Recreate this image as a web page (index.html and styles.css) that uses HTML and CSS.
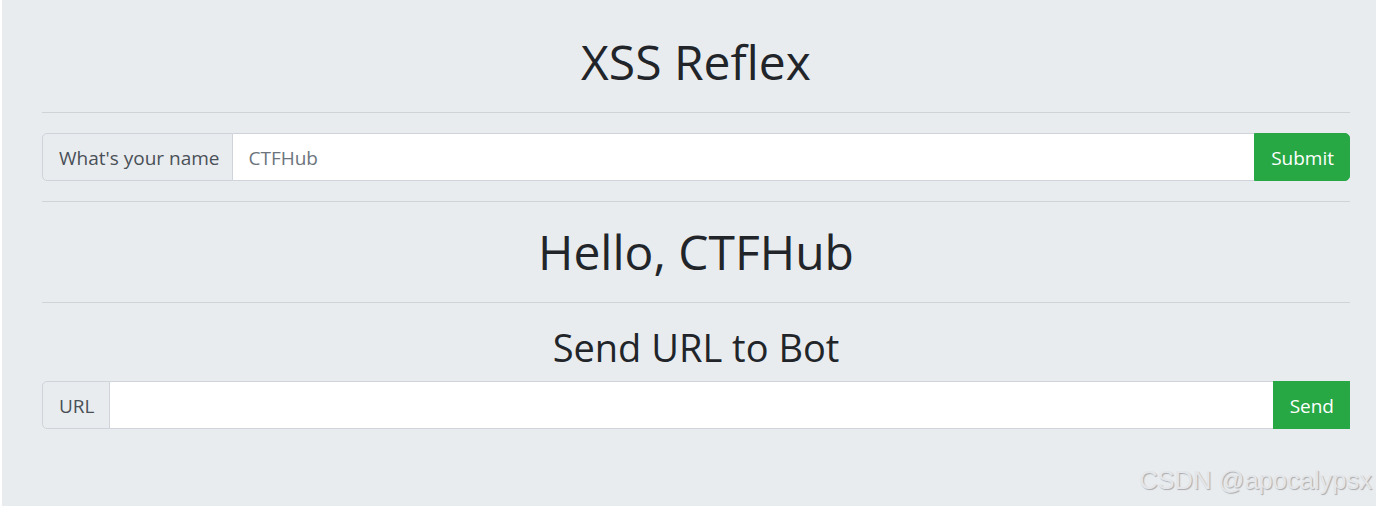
FILE: index.html
```html
<!DOCTYPE html>
<html lang="en">
<head>
<meta charset="utf-8">
<title>XSS Reflex</title>
<link rel="stylesheet" href="styles.css">
</head>
<body>
<main class="jumbo">
  <h1 class="title">XSS Reflex</h1>
  <hr class="rule">
  <form class="input-group">
    <span class="addon">What's your name</span>
    <input class="field" type="text" placeholder="CTFHub">
    <button class="btn btn-submit" type="button">Submit</button>
  </form>
  <hr class="rule">
  <h1 class="title">Hello, CTFHub</h1>
  <hr class="rule">
  <h2 class="subtitle">Send URL to Bot</h2>
  <form class="input-group">
    <span class="addon addon-url">URL</span>
    <input class="field" type="text" value="">
    <button class="btn btn-send" type="button">Send</button>
  </form>
  <div class="watermark">CSDN @apocalypsx</div>
</main>
</body>
</html>
```

FILE: styles.css
```css
html, body {
  margin: 0;
  padding: 0;
  background: #ffffff;
}

body {
  font-family: "Open Sans", "Noto Sans", sans-serif;
  color: #212529;
}

.jumbo {
  position: relative;
  margin-left: 2px;
  min-height: 506px;
  box-sizing: border-box;
  background: #e9ecef;
  padding: 32px 26px 0 40px;
}

.title {
  margin: 0;
  height: 60px;
  font-size: 48px;
  line-height: 60px;
  font-weight: 400;
  text-align: center;
  color: #212529;
}

.subtitle {
  margin: 0 0 10px;
  height: 48px;
  font-size: 38px;
  line-height: 48px;
  font-weight: 400;
  text-align: center;
  color: #212529;
}

.rule {
  margin: 20px 0;
  border: 0;
  border-top: 1px solid rgba(0, 0, 0, 0.1);
  height: 0;
}

.input-group {
  display: flex;
  height: 48px;
  margin: 0;
}

.addon {
  display: flex;
  align-items: center;
  padding: 1px 13px 0 16px;
  font-size: 19px;
  color: #495057;
  background: #e9ecef;
  border: 1px solid #ced4da;
  border-radius: 5px 0 0 5px;
  box-sizing: border-box;
}

.addon-url {
  padding: 1px 14px 0 16px;
}

.field {
  flex: 1;
  min-width: 0;
  height: 48px;
  box-sizing: border-box;
  margin: 0;
  padding: 1px 15px 0;
  font-family: inherit;
  font-size: 19px;
  color: #495057;
  background: #ffffff;
  border: 1px solid #ced4da;
  border-left: 0;
  border-right: 0;
  border-radius: 0;
  outline: none;
}

.field::placeholder {
  color: #6c757d;
  opacity: 1;
}

.btn {
  height: 48px;
  box-sizing: border-box;
  margin: 0;
  padding: 1px 16px 0;
  font-family: inherit;
  font-size: 19px;
  color: #ffffff;
  background: #28a745;
  border: 1px solid #28a745;
  border-radius: 0 5px 5px 0;
}

.btn-submit {
  padding: 1px 15px 0 16px;
}

.btn-send {
  border-radius: 0;
  padding: 1px 15px 0 16px;
}

.watermark {
  position: absolute;
  right: 4px;
  bottom: 11px;
  font-family: "Liberation Sans", Arial, sans-serif;
  font-size: 25.5px;
  line-height: 30px;
  color: #e4e6e9;
  text-shadow: 1px 1px 1px #a9abae;
  white-space: nowrap;
}
```
